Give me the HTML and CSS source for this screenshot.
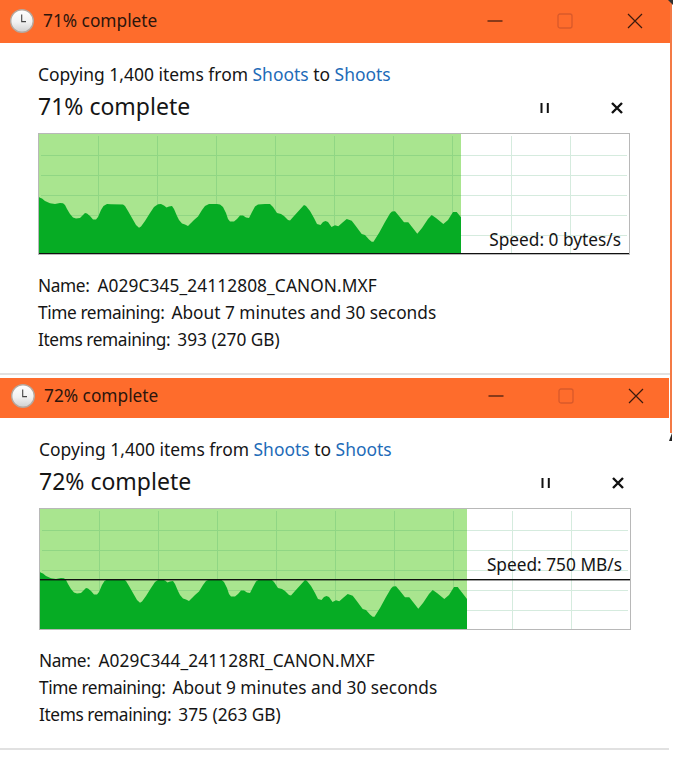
FILE: index.html
```html
<!DOCTYPE html>
<html lang="en">
  <head>
    <meta charset="UTF-8" />
    <meta name="viewport" content="width=device-width, initial-scale=1.0" />
    <title>Copy progress</title>
    <link rel="stylesheet" href="styles.css">
  </head>

  <body>
    <div class="window-edge"></div>
    <div class="window-corner"></div>
    <div class="window-corner-low"></div>

    <!-- first copy dialog -->
    <section class="window window-first">
      <header class="titlebar">
        <svg class="clock" width="26" height="26" viewBox="0 0 26 26">
          <defs>
            <linearGradient id="clockFace" x1="0" y1="0" x2="0" y2="1">
              <stop offset="0" stop-color="#ffffff" />
              <stop offset="0.55" stop-color="#f1f1f1" />
              <stop offset="1" stop-color="#cfcfcf" />
            </linearGradient>
            <pattern id="grid" width="59" height="20" x="59" y="21" patternUnits="userSpaceOnUse">
              <rect class="grid-line" x="0" y="0" width="1" height="20" />
              <rect class="grid-line" x="1" y="0" width="58" height="1" />
            </pattern>
          </defs>
          <circle cx="13" cy="13" r="11.3" fill="url(#clockFace)" stroke="#b5a79e" stroke-width="1.4" />
          <path d="M12.7 6.5V13.6H17" fill="none" stroke="#444" stroke-width="1.1" />
        </svg>
        <span class="title-text">71% complete</span>
        <div class="window-buttons">
          <svg width="16" height="16" viewBox="0 0 16 16"><path d="M0.5 8H15.5" class="btn-stroke" /></svg>
          <svg width="16" height="16" viewBox="0 0 16 16"><rect x="1" y="1" width="14" height="14" rx="2" class="btn-dim" /></svg>
          <svg width="16" height="16" viewBox="0 0 16 16"><path d="M1 1L15 15M15 1L1 15" class="btn-stroke" /></svg>
        </div>
      </header>

      <div class="content">
        <p class="copy-line">Copying 1,400 items from <a href="#">Shoots</a> to <a href="#">Shoots</a></p>
        <div class="heading-row">
          <h1>71% complete</h1>
          <div class="controls">
            <svg width="12" height="12" viewBox="0 0 12 12"><path d="M2.5 1V11M8.8 1V11" class="ctl-pause" /></svg>
            <svg width="12" height="12" viewBox="0 0 12 12"><path d="M1 1L11 11M11 1L1 11" class="ctl-stop" /></svg>
          </div>
        </div>

        <div class="chart">
          <svg width="590" height="120" viewBox="0 0 590 120">
            <rect class="chart-done" width="422" height="120" />
            <rect x="2" y="2" width="586" height="118" fill="url(#grid)" />
            <path class="chart-area" d="M0 63L1 63.7L3 64.5L6 67L11 69.3L16 70L21 69L24 69.3L26 71L28 75L31 80L34 83.5L37 84.5L41 84L44 81L46 79L48 79.5L51 82L54 85.5L57 85.5L59 83L62 76L64.5 72L68 70L72 70.2L84 70.5L86 72L89 77L93 84L97 91L100 93.7L102 92.5L106 87L111 79L115 73L119 70.3L122 70L125 71.5L127.5 73.5L130 72.5L133 72L135 75L138 82L140 86L143 89.5L146 90.5L149 92L152 89L155 86L159 82.5L163 76L166 72L170 70L178 70L181 70.5L184 73L187 79L189 85L191 87.5L195 87.5L198 85L201 81.5L204 81.5L207 83.5L210 84L213 78L216 72.5L219 70.5L226 70L231 70L234 73L238 79L242 80L245 82L249 86L251 86.5L255 82L260 76.5L265 71L267 72L271 77L275 84L278 90L281.5 91L284 88L286.5 87L289 88L292.5 93L296 91.3L299.3 92.3L303 89L307.7 85L312.7 86.7L316 91L322.7 100L326 101L330 105.5L332.7 107.7L334.5 107.7L340 99L346 88L351 79.5L353 77.5L356 77.3L360 82L365 88.3L369.3 88.3L373 93L378.3 99.7L383 94L389 85L392.7 81L397 84L404.3 90L409 86L414 78L417.7 78L422 83.3V120H0Z" />
            <rect class="chart-line" y="119" width="590" height="1.4" />
          </svg>
          <span class="speed speed-low">Speed: 0 bytes/s</span>
        </div>

        <dl class="details">
          <div><dt>Name:</dt><dd class="file-name">A029C345_24112808_CANON.MXF</dd></div>
          <div><dt>Time remaining:</dt><dd>About 7 minutes and 30 seconds</dd></div>
          <div><dt>Items remaining:</dt><dd>393 (270 GB)</dd></div>
        </dl>
      </div>
      <div class="divider"></div>
    </section>

    <!-- second copy dialog -->
    <section class="window window-second">
      <header class="titlebar">
        <svg class="clock" width="26" height="26" viewBox="0 0 26 26">
          <circle cx="13" cy="13" r="11.3" fill="url(#clockFace)" stroke="#b5a79e" stroke-width="1.4" />
          <path d="M12.7 6.5V13.6H17" fill="none" stroke="#444" stroke-width="1.1" />
        </svg>
        <span class="title-text">72% complete</span>
        <div class="window-buttons">
          <svg width="16" height="16" viewBox="0 0 16 16"><path d="M0.5 8H15.5" class="btn-stroke" /></svg>
          <svg width="16" height="16" viewBox="0 0 16 16"><rect x="1" y="1" width="14" height="14" rx="2" class="btn-dim" /></svg>
          <svg width="16" height="16" viewBox="0 0 16 16"><path d="M1 1L15 15M15 1L1 15" class="btn-stroke" /></svg>
        </div>
      </header>

      <div class="content">
        <p class="copy-line">Copying 1,400 items from <a href="#">Shoots</a> to <a href="#">Shoots</a></p>
        <div class="heading-row">
          <h1>72% complete</h1>
          <div class="controls">
            <svg width="12" height="12" viewBox="0 0 12 12"><path d="M2.5 1V11M8.8 1V11" class="ctl-pause" /></svg>
            <svg width="12" height="12" viewBox="0 0 12 12"><path d="M1 1L11 11M11 1L1 11" class="ctl-stop" /></svg>
          </div>
        </div>

        <div class="chart">
          <svg width="590" height="120" viewBox="0 0 590 120">
            <rect class="chart-done" width="427" height="120" />
            <rect x="2" y="2" width="586" height="118" fill="url(#grid)" />
            <path class="chart-area" d="M0 63L1 63.7L3 64.5L6 67L11 69.3L16 70L21 69L24 69.3L26 71L28 75L31 80L34 83.5L37 84.5L41 84L44 81L46 79L48 79.5L51 82L54 85.5L57 85.5L59 83L62 76L64.5 72L68 70L72 70.2L84 70.5L86 72L89 77L93 84L97 91L100 93.7L102 92.5L106 87L111 79L115 73L119 70.3L122 70L125 71.5L127.5 73.5L130 72.5L133 72L135 75L138 82L140 86L143 89.5L146 90.5L149 92L152 89L155 86L159 82.5L163 76L166 72L170 70L178 70L181 70.5L184 73L187 79L189 85L191 87.5L195 87.5L198 85L201 81.5L204 81.5L207 83.5L210 84L213 78L216 72.5L219 70.5L226 70L231 70L234 73L238 79L242 80L245 82L249 86L251 86.5L255 82L260 76.5L265 71L267 72L271 77L275 84L278 90L281.5 91L284 88L286.5 87L289 88L292.5 93L296 91.3L299.3 92.3L303 89L307.7 85L312.7 86.7L316 91L322.7 100L326 101L330 105.5L332.7 107.7L334.5 107.7L340 99L346 88L351 79.5L353 77.5L356 77.3L360 82L365 88.3L369.3 88.3L373 93L378.3 99.7L383 94L389 85L392.7 81L397 84L404.3 90L409 86L414 78L417.7 78L427 90V120H0Z" />
            <rect class="chart-line" y="70" width="590" height="1.4" />
          </svg>
          <span class="speed speed-high">Speed: 750 MB/s</span>
        </div>

        <dl class="details">
          <div><dt>Name:</dt><dd class="file-name">A029C344_241128RI_CANON.MXF</dd></div>
          <div><dt>Time remaining:</dt><dd>About 9 minutes and 30 seconds</dd></div>
          <div><dt>Items remaining:</dt><dd>375 (263 GB)</dd></div>
        </dl>
      </div>
      <div class="divider"></div>
    </section>
  </body>
</html>
```

FILE: styles.css
```css
* {
  margin: 0;
  padding: 0;
  box-sizing: border-box;
}

body {
  position: relative;
  width: 673px;
  height: 762px;
  overflow: hidden;
  background-color: #fff;
  color: #151515;
  font-family: "Noto Sans", "Open Sans", sans-serif;
  font-size: 17.3px;
}

/* strip of the window behind, runs down the right side */
.window-edge {
  position: absolute;
  top: 0;
  left: 670px;
  width: 2px;
  height: 433px;
  background-color: #f47a45;
}

.window-corner {
  position: absolute;
  top: 0;
  right: 0;
  width: 5px;
  height: 5px;
  background-color: #333;
  clip-path: polygon(0 0, 100% 0, 100% 100%);
}

.window-corner-low {
  position: absolute;
  top: 433px;
  left: 669px;
  width: 3px;
  height: 8px;
  background-color: #222;
  clip-path: polygon(100% 0, 100% 100%, 0 100%);
}

.window-first {
  width: 670px;
  height: 378px;
}

.window-second {
  width: 669px;
  height: 372px;
}

.titlebar {
  display: flex;
  align-items: center;
  background-color: #fe6c2c;
  color: #2c150c;
}

.window-first .titlebar {
  height: 43px;
  padding-left: 9px;
  padding-bottom: 2px;
}

.window-second .titlebar {
  height: 40px;
  padding-left: 10px;
  padding-bottom: 5px;
}

.clock {
  flex: none;
}

.title-text {
  margin-left: 8px;
}

.window-buttons {
  display: flex;
  gap: 54px;
  margin-left: auto;
}

.window-first .window-buttons {
  margin-right: 27px;
}

.window-second .window-buttons {
  margin-right: 25px;
}

.btn-stroke {
  fill: none;
  stroke: #3b1a0e;
  stroke-width: 1.2;
}

.btn-dim {
  fill: none;
  stroke: #d9592a;
  stroke-width: 1.3;
}

.content {
  padding-top: 20px;
}

.window-first .content {
  padding-left: 38px;
}

.window-second .content {
  padding-left: 39px;
}

.copy-line {
  height: 24px;
  font-size: 17.45px;
  line-height: 22px;
}

a {
  color: #1e6bb8;
  text-decoration: none;
}

.heading-row {
  display: flex;
  align-items: center;
  justify-content: space-between;
  width: 585px;
  height: 38px;
}

h1 {
  font-size: 23px;
  font-weight: 400;
}

.controls {
  display: flex;
  gap: 60px;
  margin-top: 4px;
}

.ctl-pause {
  fill: none;
  stroke: #111;
  stroke-width: 2;
}

.ctl-stop {
  fill: none;
  stroke: #111;
  stroke-width: 2.4;
}

.chart {
  position: relative;
  width: 592px;
  height: 122px;
  margin-top: 8px;
  border: 1px solid #b8b8b8;
}

.chart svg {
  display: block;
}

.grid-line {
  fill: #2b9a5a;
  fill-opacity: 0.2;
}

.chart-done {
  fill: #a9e58f;
}

.chart-area {
  fill: #06ac24;
}

.chart-line {
  fill: #111;
}

.speed {
  position: absolute;
  right: 8px;
  line-height: 22px;
}

.speed-low {
  bottom: 3px;
}

.speed-high {
  top: 45px;
}

.details {
  margin-top: 17px;
  line-height: 27px;
}

.details div {
  display: flex;
  gap: 7px;
}

.details dt {
  letter-spacing: -0.4px;
}

.file-name {
  margin-left: 1px;
  letter-spacing: 0.1px;
}

.divider {
  width: 100%;
  height: 2px;
  margin-top: 20px;
  background-color: #e1e1e1;
}
```
